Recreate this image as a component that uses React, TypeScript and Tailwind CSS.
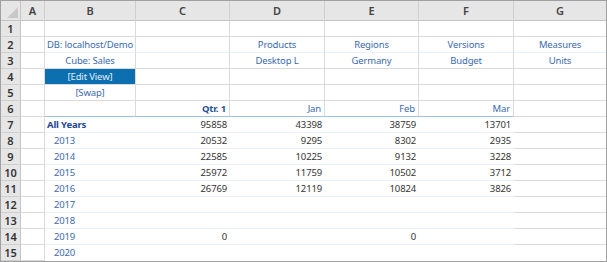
import React from "react";

type Cell = { t?: string; cls?: string };

const cols = ["A", "B", "C", "D", "E", "F", "G"];

const blue = "text-[#3b6aae]";
const num = "text-[#333333] justify-end pr-[3px]";

function rowCells(r: number): Cell[] {
  const empty: Cell[] = [{}, {}, {}, {}, {}, {}, {}];
  switch (r) {
    case 2:
      return [{}, { t: "DB: localhost/Demo", cls: `${blue} justify-center` }, {}, { t: "Products", cls: `${blue} justify-center` }, { t: "Regions", cls: `${blue} justify-center` }, { t: "Versions", cls: `${blue} justify-center` }, { t: "Measures", cls: `${blue} justify-center` }];
    case 3:
      return [{}, { t: "Cube: Sales", cls: `${blue} justify-center` }, {}, { t: "Desktop L", cls: `${blue} justify-center` }, { t: "Germany", cls: `${blue} justify-center` }, { t: "Budget", cls: `${blue} justify-center` }, { t: "Units", cls: `${blue} justify-center` }];
    case 4:
      return [{}, { t: "[Edit View]", cls: "text-[#e3eef8] justify-center bg-[#0c6fb0]" }, {}, {}, {}, {}, {}];
    case 5:
      return [{}, { t: "[Swap]", cls: `${blue} justify-center` }, {}, {}, {}, {}, {}];
    case 6:
      return [{}, {}, { t: "Qtr. 1", cls: "text-[#1d4f99] font-bold justify-end pr-[3px]" }, { t: "Jan", cls: `${blue} justify-end pr-[3px]` }, { t: "Feb", cls: `${blue} justify-end pr-[3px]` }, { t: "Mar", cls: `${blue} justify-end pr-[3px]` }, {}];
    case 7:
      return [{}, { t: "All Years", cls: "text-[#1d4591] font-bold pl-[2px]" }, { t: "95858", cls: num }, { t: "43398", cls: num }, { t: "38759", cls: num }, { t: "13701", cls: num }, {}];
    default:
      break;
  }
  const data: Record<number, string[]> = {
    8: ["2013", "20532", "9295", "8302", "2935"],
    9: ["2014", "22585", "10225", "9132", "3228"],
    10: ["2015", "25972", "11759", "10502", "3712"],
    11: ["2016", "26769", "12119", "10824", "3826"],
    12: ["2017", "", "", "", ""],
    13: ["2018", "", "", "", ""],
    14: ["2019", "0", "", "0", ""],
    15: ["2020", "", "", "", ""],
  };
  if (data[r]) {
    const d = data[r];
    return [{}, { t: d[0], cls: `${blue} pl-[9px]` }, { t: d[1], cls: num }, { t: d[2], cls: num }, { t: d[3], cls: num }, { t: d[4], cls: num }, {}];
  }
  return empty;
}

function borderCls(r: number, c: number): string {
  const gray = "border-[#dadada]";
  if (c === 0) return `border-r border-b ${gray}`;
  if (c === 6) {
    if (r === 2) return "border-b border-[#e8f0f8]";
    if (r === 15) return "";
    return `border-b ${gray}`;
  }
  if (r <= 6) {
    if (r === 2) return "border-r border-b border-r-[#dadada] border-b-[#e8f0f8]";
    if (r === 6) return "border-r border-b border-r-[#dadada] border-b-[#9fc0e0]";
    return `border-r border-b ${gray}`;
  }
  if (r === 15) return "";
  return "border-b border-[#e8f0f8]";
}

export default function App() {
  const rows = Array.from({ length: 15 }, (_, i) => i + 1);
  return (
    <div
      className="w-[607px] h-[262px] bg-white border border-[#a0a0a0] overflow-hidden"
      style={{ fontFamily: '"Noto Sans", "Open Sans", sans-serif' }}
    >
      <div className="grid grid-cols-[20px_24px_91px_94px_95px_94px_95px_92px] grid-rows-[20px_repeat(15,16px)] text-[9.5px] leading-none tracking-[-0.15px]">
        <div className="relative bg-[#e6e6e6] border-r border-b border-[#c4c4c4]">
          <svg className="absolute right-[2px] bottom-[2px]" width="11" height="11" viewBox="0 0 11 11">
            <polygon points="11,0 11,11 0,11" fill="#c8c8c8" />
          </svg>
        </div>
        {cols.map((c, i) => (
          <div
            key={c}
            className={`flex items-center justify-center bg-[#e6e6e6] border-b border-[#c4c4c4] text-[11px] font-semibold tracking-normal text-[#444444] ${i < 6 ? "border-r border-r-[#cfcfcf]" : ""}`}
          >
            {c}
          </div>
        ))}
        {rows.map((r) => (
          <React.Fragment key={r}>
            <div className="flex items-center justify-center bg-[#e6e6e6] border-r border-b border-[#c4c4c4] border-b-[#cfcfcf] text-[11px] font-semibold tracking-normal text-[#333333]">
              {r}
            </div>
            {rowCells(r).map((cell, c) => (
              <div
                key={c}
                className={`flex items-center whitespace-nowrap overflow-hidden ${borderCls(r, c)} ${cell.cls ?? ""}`}
              >
                {cell.t}
              </div>
            ))}
          </React.Fragment>
        ))}
      </div>
    </div>
  );
}
